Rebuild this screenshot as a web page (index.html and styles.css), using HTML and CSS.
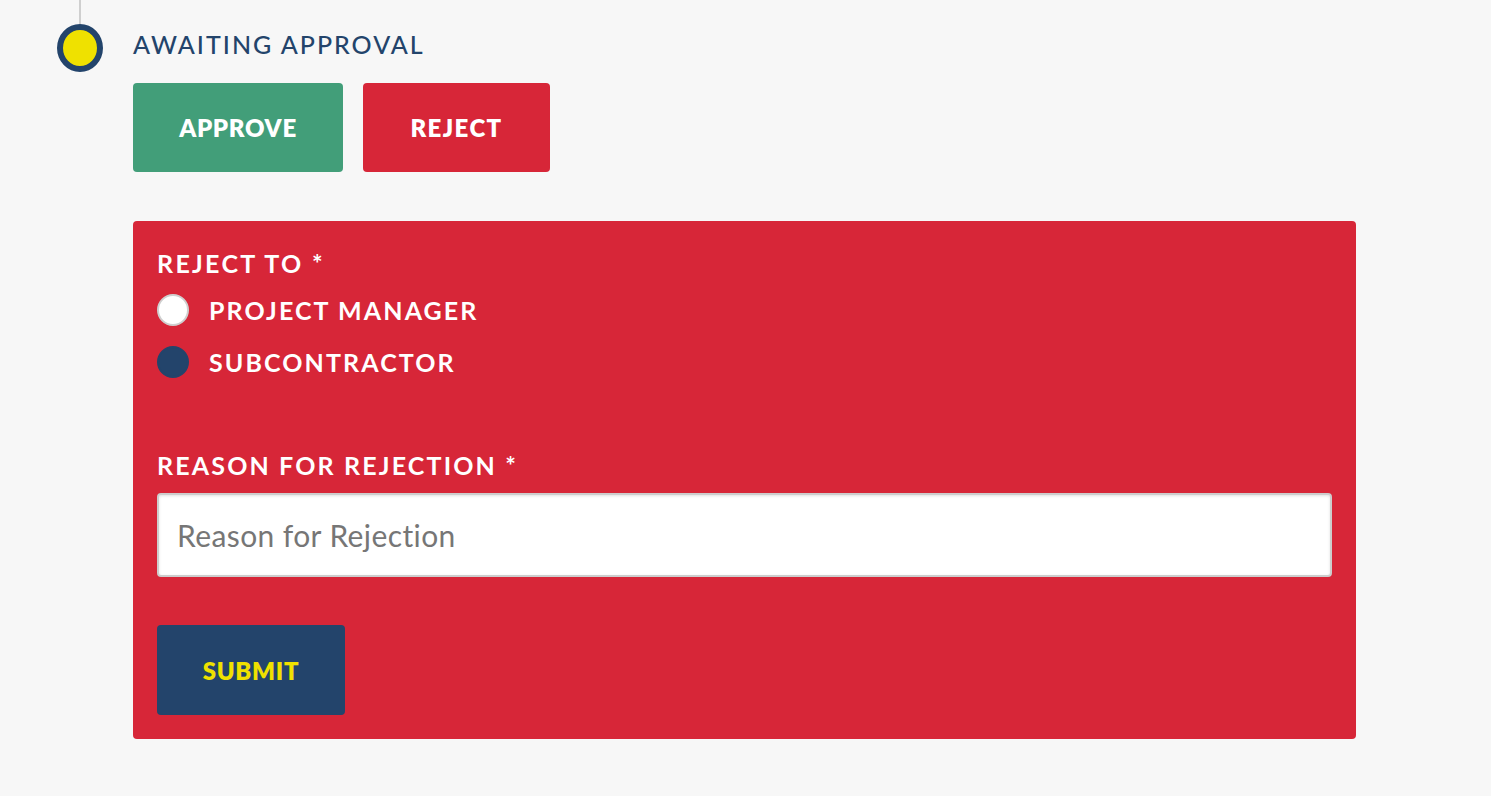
FILE: index.html
```html
<!DOCTYPE html>
<html lang="en">
<head>
    <meta charset="UTF-8">
    <meta name="viewport" content="width=device-width, initial-scale=1.0">
    <title>Awaiting Approval</title>
    <link rel="stylesheet" href="styles.css">
</head>
<body>
    <div class="step">
        <div class="marker">
            <div class="line"></div>
            <div class="dot"></div>
        </div>
        <div class="content">
            <h2 class="status">AWAITING APPROVAL</h2>
            <div class="actions">
                <button class="btn btn-approve">APPROVE</button>
                <button class="btn btn-reject">REJECT</button>
            </div>
            <form class="reject-panel">
                <div class="field-label">REJECT TO *</div>
                <label class="radio">
                    <input type="radio" name="reject_to" value="pm">
                    <span class="radio-mark"></span>
                    <span class="radio-text">PROJECT MANAGER</span>
                </label>
                <label class="radio">
                    <input type="radio" name="reject_to" value="sub" checked>
                    <span class="radio-mark"></span>
                    <span class="radio-text">SUBCONTRACTOR</span>
                </label>
                <div class="field-label reason-label">REASON FOR REJECTION *</div>
                <input class="text-input" type="text" placeholder="Reason for Rejection">
                <button type="button" class="btn btn-submit">SUBMIT</button>
            </form>
        </div>
    </div>
</body>
</html>
```

FILE: styles.css
```css
body {
    margin: 0;
    background: #f7f7f7;
    font-family: Lato, "Open Sans", sans-serif;
    color: #23446b;
}
.step {
    display: flex;
    padding-left: 57px;
}
.marker {
    width: 46px;
    display: flex;
    flex-direction: column;
    align-items: center;
}
.line {
    width: 2px;
    height: 24px;
    background: #cfcfcf;
}
.dot {
    width: 34px;
    height: 36px;
    border: 6px solid #23446b;
    border-radius: 50%;
    background: #efe100;
}
.content {
    margin-left: 30px;
    width: 1223px;
}
.status {
    margin: 0;
    padding-top: 30px;
    font-size: 25px;
    line-height: 28px;
    font-weight: 500;
    letter-spacing: 2px;
    color: #23446b;
}
.actions {
    display: flex;
    gap: 20px;
    margin-top: 25px;
}
.btn {
    border: 0;
    border-radius: 4px;
    height: 89px;
    padding: 0;
    font-family: Lato, "Open Sans", sans-serif;
    font-size: 24px;
    font-weight: 800;
    letter-spacing: 0.7px;
    color: #fff;
    cursor: pointer;
}
.btn-approve {
    background: #429e79;
    width: 210px;
}
.btn-reject {
    background: #d72638;
    width: 187px;
    letter-spacing: 1.4px;
}
.reject-panel {
    margin-top: 49px;
    background: #d72638;
    border-radius: 4px;
    padding: 28px 24px 24px;
    display: flex;
    flex-direction: column;
    align-items: flex-start;
}
.field-label {
    color: #fff;
    font-size: 25px;
    font-weight: 700;
    line-height: 28px;
    letter-spacing: 2.3px;
}
.radio {
    display: flex;
    align-items: center;
    height: 32px;
    margin-top: 20px;
    cursor: pointer;
}
.field-label + .radio {
    margin-top: 17px;
}
.radio input {
    display: none;
}
.radio-mark {
    width: 28px;
    height: 28px;
    border: 2px solid #cfcfcf;
    border-radius: 50%;
    background: #fff;
}
.radio input:checked + .radio-mark {
    background: #23446b;
    border-color: #23446b;
}
.radio-text {
    margin-left: 20px;
    color: #fff;
    font-size: 25px;
    font-weight: 700;
    letter-spacing: 2.1px;
}
.reason-label {
    margin-top: 73px;
    letter-spacing: 2.15px;
}
.text-input {
    box-sizing: border-box;
    width: 100%;
    height: 84px;
    margin-top: 14px;
    padding: 0 18px;
    border: 2px solid #cdcdcd;
    border-radius: 4px;
    box-shadow: inset 0 1px 3px rgba(0, 0, 0, 0.12);
    font-family: Lato, "Open Sans", sans-serif;
    font-size: 30px;
    letter-spacing: 0.4px;
    color: #333;
    background: #fff;
}
.text-input::placeholder {
    color: #767676;
}
.btn-submit {
    margin-top: 48px;
    width: 188px;
    height: 90px;
    background: #23446b;
    color: #efe100;
}
```
